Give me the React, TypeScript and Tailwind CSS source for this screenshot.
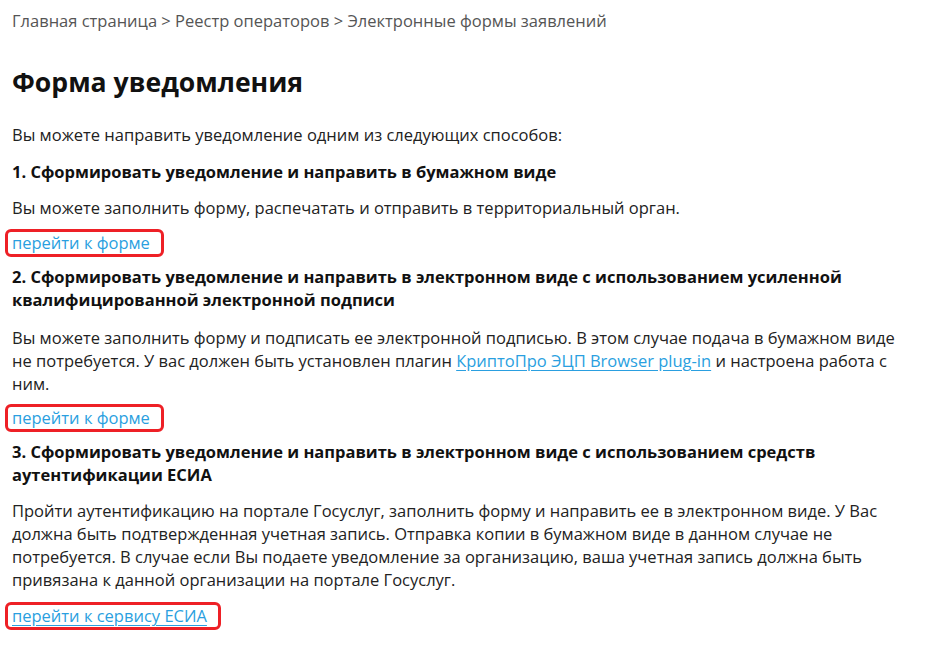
import React from "react";

const font = { fontFamily: '"Open Sans", "Noto Sans", sans-serif' };

function BoxLink({ children, underline, top }: { children: React.ReactNode; underline?: boolean; top: string }) {
  return (
    <div className={top + " ml-[5px]"}>
      <span className="inline-block border-[3px] border-[#ee2026] rounded-[6px] pl-[4px] pr-[11px] h-[28px] leading-[22px]">
        <a className={"text-[16.5px] text-[#2a9fe0] " + (underline ? "underline underline-offset-[3px]" : "")}>{children}</a>
      </span>
    </div>
  );
}

export default function App() {
  return (
    <div className="bg-white w-[944px] h-[654px] overflow-hidden text-[#222] text-[16.5px] leading-[23px]" style={font}>
      <div className="pl-[12px] w-[906px]">
        <div className="pt-[10px] text-[16.5px] leading-[22px] text-[#555]">
          Главная страница &gt; Реестр операторов &gt; Электронные формы заявлений
        </div>
        <h1 className="mt-[34px] text-[26.6px] leading-[32px] font-bold text-[#111]">Форма уведомления</h1>
        <p className="mt-[25px]">Вы можете направить уведомление одним из следующих способов:</p>
        <p className="mt-[14px] font-bold text-[#111]">1. Сформировать уведомление и направить в бумажном виде</p>
        <p className="mt-[13px]">Вы можете заполнить форму, распечатать и отправить в территориальный орган.</p>
      </div>
      <BoxLink top="mt-[10px]">перейти к форме</BoxLink>
      <div className="pl-[12px] w-[906px]">
        <p className="mt-[8px] font-bold text-[#111]">
          2. Сформировать уведомление и направить в электронном виде с использованием усиленной квалифицированной электронной подписи
        </p>
        <p className="mt-[15px]">
          Вы можете заполнить форму и подписать ее электронной подписью. В этом случае подача в бумажном виде не потребуется. У вас должен быть установлен плагин{" "}
          <a className="text-[#2a9fe0] underline underline-offset-[3px]">КриптоПро ЭЦП Browser plug-in</a> и настроена работа с ним.
        </p>
      </div>
      <BoxLink top="mt-[9px]">перейти к форме</BoxLink>
      <div className="pl-[12px] w-[906px]">
        <p className="mt-[8px] font-bold text-[#111]">
          3. Сформировать уведомление и направить в электронном виде с использованием средств аутентификации ЕСИА
        </p>
        <p className="mt-[13px]">
          Пройти аутентификацию на портале Госуслуг, заполнить форму и направить ее в электронном виде. У Вас должна быть подтвержденная учетная запись. Отправка копии в бумажном виде в данном случае не потребуется. В случае если Вы подаете уведомление за организацию, ваша учетная запись должна быть привязана к данной организации на портале Госуслуг.
        </p>
      </div>
      <BoxLink underline top="mt-[11px]">перейти к сервису ЕСИА</BoxLink>
    </div>
  );
}
